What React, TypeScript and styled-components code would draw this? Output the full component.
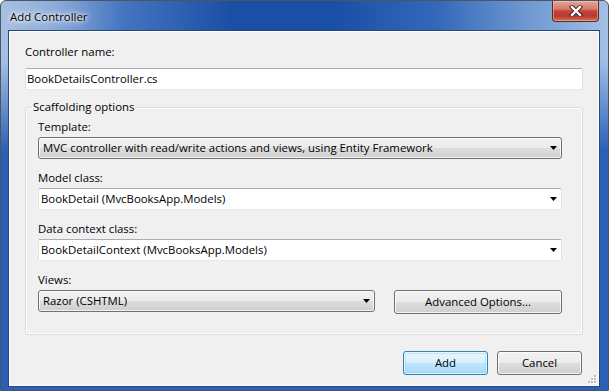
import React from "react";
import styled, { createGlobalStyle } from "styled-components";

const GlobalStyle = createGlobalStyle`
  html, body { margin: 0; padding: 0; background: #ffffff; }
  body {
    font-family: "Open Sans", "Noto Sans", "Liberation Sans", sans-serif;
    font-size: 11.4px;
    color: #000;
  }
  * { box-sizing: border-box; }
`;

const Window = styled.div`
  width: 609px;
  height: 391px;
  display: flex;
  flex-direction: column;
  border: 1px solid #4f5560;
  border-radius: 6px 6px 0 0;
  overflow: hidden;
  background:
    linear-gradient(180deg, rgba(43, 96, 183, 0) 0px, rgba(43, 96, 183, 0) 60px, #2b60b7 150px, #2b60b7 100%),
    linear-gradient(90deg, #a7c0e0 0%, #8cadda 9%, #4575c0 20%, #1b4fa5 38%, #1a4fa6 55%, #3468b9 72%, #6b96d0 86%, #a3c0e4 100%);
`;

const TitleBar = styled.div`
  height: 29px;
  flex: none;
  display: flex;
  justify-content: space-between;
  align-items: flex-start;
  padding-left: 9px;
`;

const Title = styled.div`
  margin-top: 8px;
  line-height: 16px;
  color: #000;
  text-shadow: 0 0 6px rgba(255, 255, 255, 0.95), 0 0 10px rgba(255, 255, 255, 0.8), 0 0 3px #fff;
`;

const CloseButton = styled.div`
  width: 47px;
  height: 21px;
  margin-right: 9px;
  border: 1px solid #5b2a26;
  border-top: none;
  border-radius: 0 0 4px 4px;
  display: flex;
  align-items: center;
  justify-content: center;
  background: linear-gradient(180deg, #e6a597 0%, #d57a68 40%, #c4443a 50%, #b8392b 75%, #d8735a 100%);
  box-shadow: inset 0 0 0 1px rgba(255, 210, 200, 0.45);
`;

const Client = styled.div`
  flex: 1;
  margin: 0 8px 3px 7px;
  border: 1px solid #26467a;
  box-shadow: inset 0 0 0 1px #ffffff;
  background: #f0f0f0;
  padding: 13px 16px 11px 16px;
  display: flex;
  flex-direction: column;
  position: relative;
`;

const Field = styled.div<{ $gap?: number }>`
  display: flex;
  flex-direction: column;
  gap: ${(p) => p.$gap ?? 2}px;
`;

const Label = styled.div`
  line-height: 16px;
  color: #000;
`;

const TextBox = styled.div<{ $pad?: number }>`
  height: 22px;
  background: #ffffff;
  border: 1px solid;
  border-color: #abadb3 #dbdfe6 #e3e9ef #e2e3ea;
  border-radius: 2px;
  display: flex;
  align-items: center;
  justify-content: space-between;
  padding: 0 4px 0 ${(p) => p.$pad ?? 1}px;
  line-height: 16px;
  color: #000;
`;

const ComboButton = styled.div<{ $width?: number }>`
  height: 22px;
  ${(p) => (p.$width ? `width: ${p.$width}px; flex: none;` : "")}
  border: 1px solid #707070;
  border-radius: 3px;
  background: linear-gradient(180deg, #f2f2f2 0%, #ebebeb 48%, #dddddd 52%, #cfcfcf 100%);
  box-shadow: inset 0 0 0 1px rgba(255, 255, 255, 0.75);
  display: flex;
  align-items: center;
  justify-content: space-between;
  padding: 0 4px 0 4px;
  line-height: 16px;
  color: #000;
`;

const GroupBox = styled.div`
  margin-top: 17px;
  position: relative;
  border: 1px solid #d5dfe5;
  border-radius: 3px;
  box-shadow: inset 0 0 0 1px #ffffff;
  padding: 11px 20px 20px 12px;
  display: flex;
  flex-direction: column;
  gap: 11px;
`;

const Legend = styled.div`
  position: absolute;
  top: -9px;
  left: 5px;
  padding: 0 2px;
  line-height: 16px;
  background: #f0f0f0;
  color: #000;
`;

const Row = styled.div`
  display: flex;
  align-items: flex-start;
  gap: 19px;
`;

const Button = styled.div<{ $width: number; $default?: boolean }>`
  width: ${(p) => p.$width}px;
  height: 24px;
  flex: none;
  border: 1px solid ${(p) => (p.$default ? "#3c7fb1" : "#707070")};
  border-radius: 3px;
  background: ${(p) =>
    p.$default
      ? "linear-gradient(180deg, #eaf6fd 0%, #d9f0fc 48%, #bee6fd 52%, #a7d9f5 100%)"
      : "linear-gradient(180deg, #f2f2f2 0%, #ebebeb 48%, #dddddd 52%, #cfcfcf 100%)"};
  box-shadow: ${(p) =>
    p.$default
      ? "inset 0 0 0 1px rgba(255,255,255,0.7), inset 0 0 0 2px rgba(110, 210, 250, 0.35)"
      : "inset 0 0 0 1px rgba(255,255,255,0.75)"};
  display: flex;
  align-items: center;
  justify-content: center;
  line-height: 16px;
  color: #000;
`;

const ButtonBar = styled.div`
  display: flex;
  justify-content: flex-end;
  gap: 9px;
  margin-top: 16px;
  padding-right: 1px;
`;

const Grip = styled.div`
  position: absolute;
  right: 2px;
  bottom: 2px;
  width: 9px;
  height: 9px;
  display: flex;
`;

const Arrow = () => (
  <svg width="7" height="4" viewBox="0 0 7 4" style={{ flex: "none" }}>
    <polygon points="0,0 7,0 3.5,4" fill="#000" />
  </svg>
);

const CloseGlyph = () => (
  <svg width="14" height="12" viewBox="0 0 14 12">
    <path d="M3 2 L11 10 M11 2 L3 10" stroke="#3b2424" strokeWidth="4.2" strokeLinecap="square" fill="none" />
    <path d="M3 2 L11 10 M11 2 L3 10" stroke="#ffffff" strokeWidth="2.4" strokeLinecap="square" fill="none" />
  </svg>
);

const GripGlyph = () => (
  <svg width="9" height="9" viewBox="0 0 9 9">
    {[
      [6, 0],
      [3, 3],
      [6, 3],
      [0, 6],
      [3, 6],
      [6, 6],
    ].map(([x, y]) => (
      <g key={`${x}-${y}`}>
        <rect x={x + 1} y={y + 1} width="2" height="2" fill="#ffffff" />
        <rect x={x} y={y} width="2" height="2" fill="#b9bcc1" />
      </g>
    ))}
  </svg>
);

export default function App() {
  return (
    <>
      <GlobalStyle />
      <Window>
        <TitleBar>
          <Title>Add Controller</Title>
          <CloseButton>
            <CloseGlyph />
          </CloseButton>
        </TitleBar>
        <Client>
          <Field $gap={8}>
            <Label>Controller name:</Label>
            <TextBox>BookDetailsController.cs</TextBox>
          </Field>
          <GroupBox>
            <Legend>Scaffolding options</Legend>
            <Field>
              <Label>Template:</Label>
              <ComboButton>
                <span>MVC controller with read/write actions and views, using Entity Framework</span>
                <Arrow />
              </ComboButton>
            </Field>
            <Field>
              <Label>Model class:</Label>
              <TextBox $pad={2}>
                <span>BookDetail (MvcBooksApp.Models)</span>
                <Arrow />
              </TextBox>
            </Field>
            <Field>
              <Label>Data context class:</Label>
              <TextBox $pad={2}>
                <span>BookDetailContext (MvcBooksApp.Models)</span>
                <Arrow />
              </TextBox>
            </Field>
            <Field>
              <Label>Views:</Label>
              <Row>
                <ComboButton $width={337}>
                  <span>Razor (CSHTML)</span>
                  <Arrow />
                </ComboButton>
                <Button $width={168}>Advanced Options...</Button>
              </Row>
            </Field>
          </GroupBox>
          <ButtonBar>
            <Button $width={85} $default>
              Add
            </Button>
            <Button $width={85}>Cancel</Button>
          </ButtonBar>
          <Grip>
            <GripGlyph />
          </Grip>
        </Client>
      </Window>
    </>
  );
}
